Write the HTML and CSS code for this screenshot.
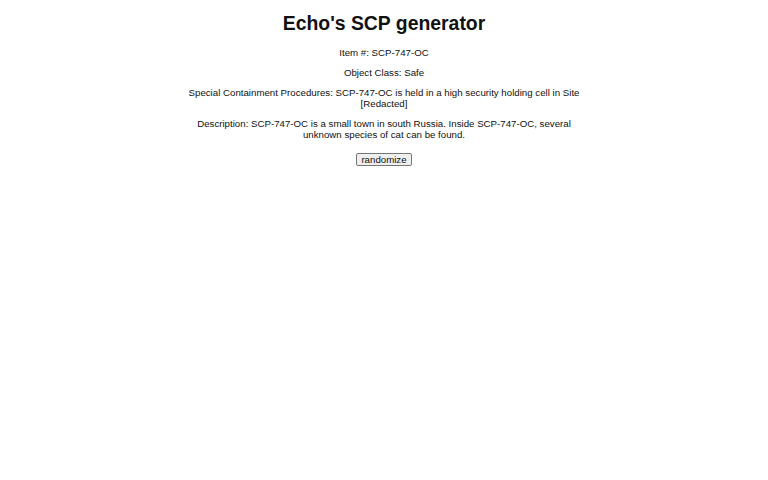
FILE: index.html
```html
<!DOCTYPE html>
<html>
<head>
<meta charset="utf-8">
<title>Echo's SCP generator</title>
<link rel="stylesheet" href="styles.css">
</head>
<body>
<main class="generator">
  <h1 class="title">Echo's SCP generator</h1>
  <p class="field">Item #: SCP-747-OC</p>
  <p class="field">Object Class: Safe</p>
  <p class="field">Special Containment Procedures: SCP-747-OC is held in a high security holding cell in Site [Redacted]</p>
  <p class="field">Description: SCP-747-OC is a small town in south Russia. Inside SCP-747-OC, several unknown species of cat can be found.</p>
  <button class="randomize" type="button">randomize</button>
</main>
</body>
</html>
```

FILE: styles.css
```css
body {
  margin: 8px;
  font-family: "Liberation Sans", Arial, sans-serif;
  background: #fff;
  color: #111;
}

.generator {
  max-width: 400px;
  margin: 0 auto;
  text-align: center;
}

.title {
  font-size: 19.4px;
  font-weight: bold;
  margin: 4px 0 12.5px;
  line-height: 22px;
}

.field {
  font-size: 9.7px;
  line-height: 11px;
  margin: 9.2px 0;
}

.randomize {
  font-family: "Liberation Sans", Arial, sans-serif;
  font-size: 9.7px;
  line-height: 11px;
  padding: 0 4px;
  margin-top: -1px;
  background: #efefef;
  border: 1px solid #767676;
  border-radius: 2px;
  color: #111;
}
```
